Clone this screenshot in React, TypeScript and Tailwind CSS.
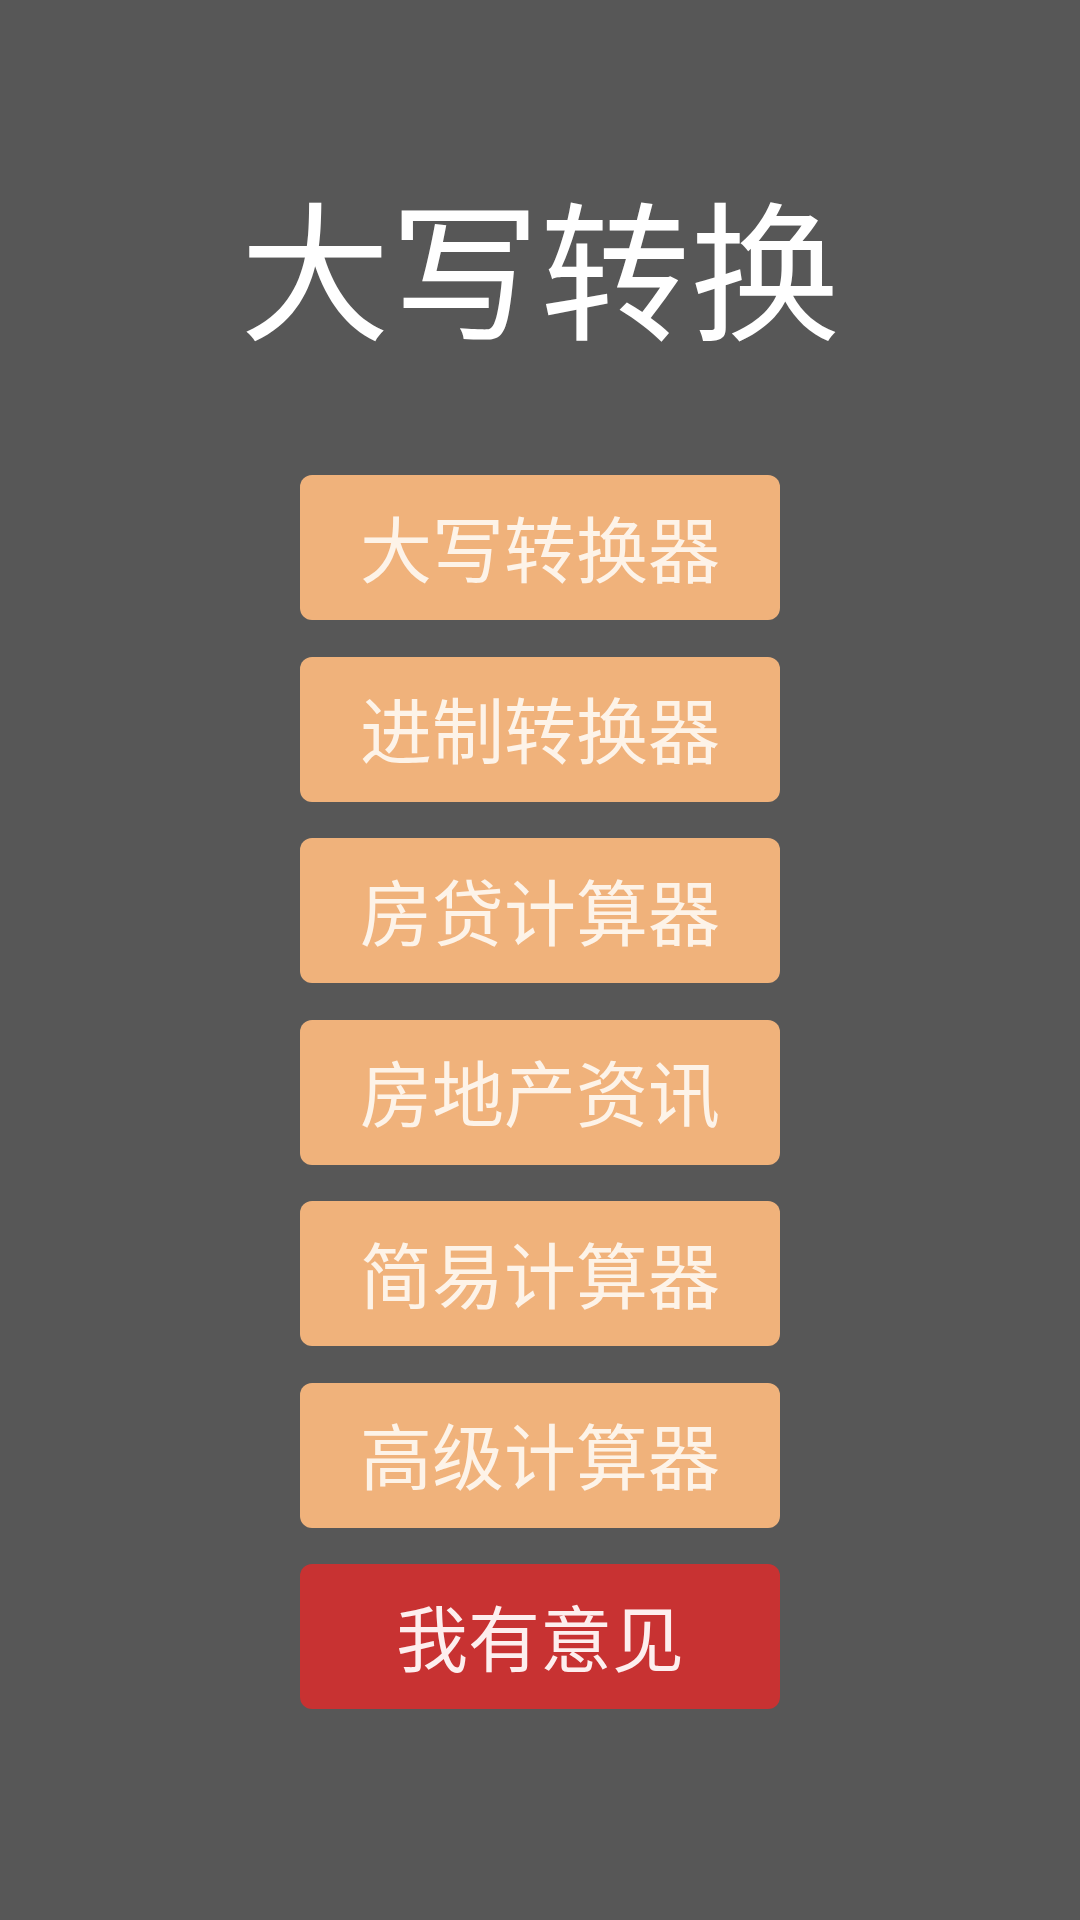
const items = ['大写转换器', '进制转换器', '房贷计算器', '房地产资讯', '简易计算器', '高级计算器']

const App = () => {
  return (
    <div
      className="w-[1080px] h-[1920px] bg-[#575757] flex flex-col items-center"
      style={{ fontFamily: '"Noto Sans CJK SC", "Noto Sans", sans-serif' }}
    >
      <h1 className="mt-[173px] text-[150px] leading-[182px] text-white font-normal">
        大写转换
      </h1>
      <div className="mt-[120px] flex flex-col gap-[36.5px]">
        {items.map((label) => (
          <button
            key={label}
            type="button"
            className="w-[480px] h-[145px] pb-[4px] rounded-[12px] bg-[#f0b27b] text-[#fdf3e8] text-[72px] leading-none flex items-center justify-center"
          >
            {label}
          </button>
        ))}
        <button
          type="button"
          className="w-[480px] h-[145px] pb-[4px] rounded-[12px] bg-[#c83232] text-[#fdeeee] text-[72px] leading-none flex items-center justify-center"
        >
          我有意见
        </button>
      </div>
    </div>
  )
}

export default App
